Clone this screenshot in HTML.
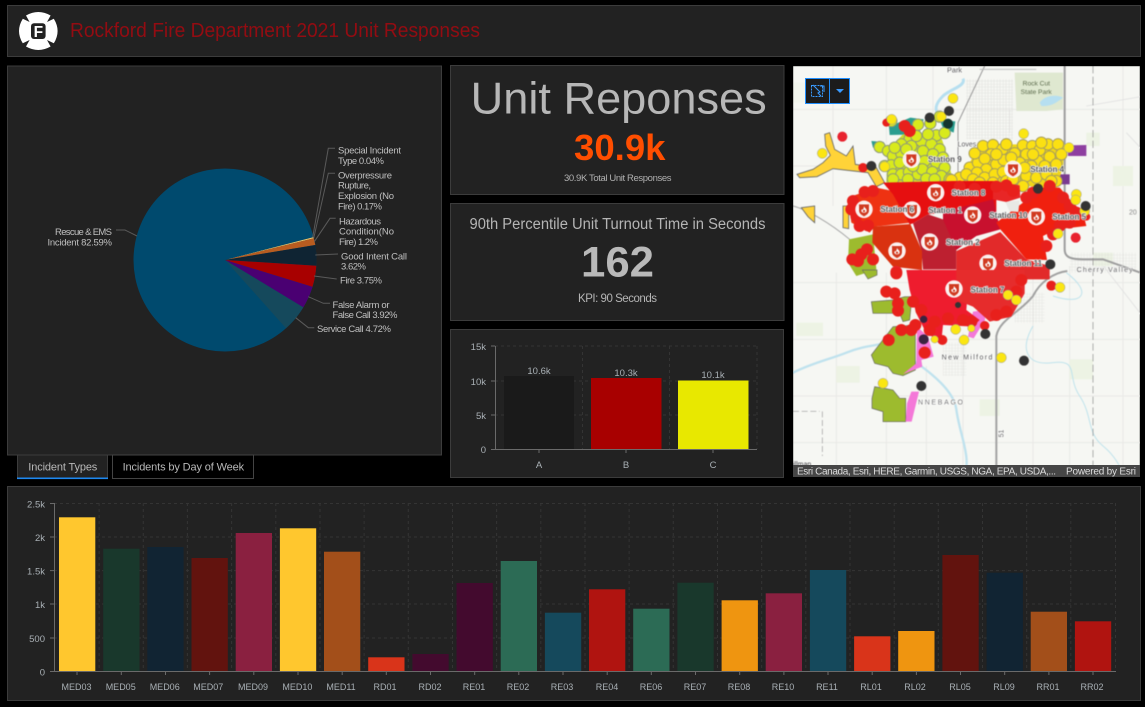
<!DOCTYPE html>
<html lang="en"><head><meta charset="utf-8"><title>Rockford Fire Department 2021 Unit Responses</title>
<style>
html,body{margin:0;padding:0;background:#000;width:1145px;height:707px;overflow:hidden}
svg{display:block;font-family:"Liberation Sans",sans-serif}
.p{fill:#222;stroke:#3c3c3c;stroke-width:1}
.pl{font-size:9.5px;fill:#c0c0c0}
.ax{font-size:9.5px;fill:#a9b0b5}
.ld{fill:none;stroke:#5a5a5a;stroke-width:1}
.gr{stroke:#343434;stroke-width:1;stroke-dasharray:3 3;fill:none}
.axl{stroke:#6a6a6a;stroke-width:1;fill:none}
.wy circle{r:17px;fill:#d8ea1c;stroke:#8f9a78;stroke-width:3px}
.ey circle{r:17px;fill:#fbe012;stroke:#a89e5c;stroke-width:3px}
.rd circle{r:18px;fill:#e8201c}
.yl circle{r:15px;fill:#fbe612;stroke:#999;stroke-width:1.5px}
.dk circle{r:15px;fill:#333}
.st{font-size:24px;font-weight:bold;fill:#5c5c5c;stroke:#f2f2f2;stroke-width:4px;paint-order:stroke}
.mp{font-size:21px;fill:#555;stroke:#fff;stroke-width:3px;paint-order:stroke}
</style></head><body>
<svg width="1145" height="707" viewBox="0 0 1145 707" xmlns="http://www.w3.org/2000/svg">
<defs>
<g id="s"><circle r="26" fill="#fff"/><circle r="22" fill="none" stroke="#eec9c2" stroke-width="1.5"/><path d="M-15-15 L15-15 L15 4 C15 13 6 18 0 21 C-6 18-15 13-15 4Z" fill="#d03a20"/><path d="M0-10 C1-4 9-2 8 5 C7 12-7 12-8 5 C-9 1-5-1-3 1 C-2-2 0-5 0-10Z" fill="#fff"/><circle cy="5" r="3.5" fill="#d03a20"/></g>
<pattern id="tx" width="18" height="18" patternUnits="userSpaceOnUse"><path d="M0 .5H18M.5 0V18M9 0V18M0 9H18" stroke="#d2d2cf" stroke-width="1.6" fill="none"/></pattern>
<clipPath id="mc"><rect x="793" y="66" width="347" height="411"/></clipPath>
</defs>
<rect width="1145" height="707" fill="#000"/>

<!-- header -->
<rect class="p" x="7.5" y="5.5" width="1133" height="51"/>
<path d="M26 15.5Q38.3 8.5 50.6 15.5L47 22L53.8 18.7Q61.4 31 53.8 43.3L47 40L50.6 46.5Q38.3 53.5 26 46.5L29.6 40L22.8 43.3Q15.2 31 22.8 18.7L29.6 22Z" fill="#fff"/>
<rect x="31" y="23.3" width="14.6" height="15.7" rx="3" fill="#222"/>
<text x="38.3" y="36.8" font-size="15.5" font-weight="bold" fill="#fff" text-anchor="middle">F</text>
<text x="70" y="37" font-size="20.5" fill="#930c12" textLength="410" lengthAdjust="spacingAndGlyphs">Rockford Fire Department 2021 Unit Responses</text>

<!-- pie panel -->
<rect class="p" x="7.5" y="66" width="434" height="389"/>
<circle cx="225" cy="260" r="91.5" fill="#004a6e"/>
<path d="M225 260L313.6 237.1L313.9 238.3Z" fill="#ecc66a"/>
<path d="M225 260L313.9 238.3L315.3 245Z" fill="#b85c20"/>
<path d="M225 260L315.3 245A91.5 91.5 0 0 1 316.3 265.7Z" fill="#0f2433"/>
<path d="M225 260L316.3 265.7A91.5 91.5 0 0 1 312.5 286.9Z" fill="#a80000"/>
<path d="M225 260L312.5 286.9A91.5 91.5 0 0 1 303.3 307.4Z" fill="#4a0072"/>
<path d="M225 260L303.3 307.4A91.5 91.5 0 0 1 286 328.2Z" fill="#15495c"/>
<path class="ld" d="M312.7 237.3L328.3 148.3H335M313.7 238.3L328.3 173.3H335M314.3 241.7L330 218.3H335.7M315.3 255L338 254M314 276L336.7 279M308.3 296.7L323.3 303.3H330M295.7 317.7L308.3 327.7H314.3M137 236L125 230H116"/>
<g class="pl">
<text x="338" y="153.3" textLength="63">Special Incident</text>
<text x="338" y="164" textLength="46">Type 0.04%</text>
<text x="338" y="178.3" textLength="54">Overpressure</text>
<text x="338" y="188.5" textLength="33">Rupture,</text>
<text x="338" y="199" textLength="56">Explosion (No</text>
<text x="338" y="209.3" textLength="44">Fire) 0.17%</text>
<text x="339" y="224.3" textLength="42">Hazardous</text>
<text x="339" y="234.6" textLength="55">Condition(No</text>
<text x="339" y="245" textLength="39">Fire) 1.2%</text>
<text x="341" y="259.3" textLength="66">Good Intent Call</text>
<text x="341" y="269.3" textLength="25">3.62%</text>
<text x="340" y="283.3" textLength="42">Fire 3.75%</text>
<text x="332.5" y="308" textLength="57">False Alarm or</text>
<text x="332.5" y="318" textLength="65">False Call 3.92%</text>
<text x="317" y="332" textLength="74">Service Call 4.72%</text>
<text x="55" y="235" textLength="57">Rescue &amp; EMS</text>
<text x="47.5" y="245.5" textLength="64.5">Incident 82.59%</text>
</g>

<!-- tabs -->
<rect x="17.5" y="455" width="90" height="23.5" fill="#222" stroke="#3c3c3c"/>
<rect x="17" y="477.5" width="91" height="1.6" fill="#1e88f0"/>
<rect x="112.5" y="455" width="141" height="23.5" fill="#000" stroke="#444"/>
<text x="28.3" y="470.3" font-size="11" fill="#b8b8b8" textLength="69">Incident Types</text>
<text x="122.6" y="470.3" font-size="11" fill="#b8b8b8" textLength="121.5">Incidents by Day of Week</text>

<!-- KPI 1 -->
<rect class="p" x="450.5" y="65.5" width="333.5" height="129"/>
<text x="470.7" y="113.5" font-size="44.5" fill="#b7b7b7" textLength="296" lengthAdjust="spacingAndGlyphs">Unit Reponses</text>
<text x="574" y="160" font-size="36" font-weight="bold" fill="#ff4e00" textLength="91.5" lengthAdjust="spacingAndGlyphs">30.9k</text>
<text x="564" y="181" font-size="9.5" fill="#b0b0b0" textLength="107.5">30.9K Total Unit Responses</text>

<!-- KPI 2 -->
<rect class="p" x="450.5" y="203.5" width="333.5" height="117"/>
<text x="469.5" y="229" font-size="15.5" fill="#b5b5b5" textLength="296" lengthAdjust="spacingAndGlyphs">90th Percentile Unit Turnout Time in Seconds</text>
<text x="581" y="276.7" font-size="43" font-weight="bold" fill="#b9b9b9" textLength="73" lengthAdjust="spacingAndGlyphs">162</text>
<text x="578" y="302" font-size="11.5" fill="#b5b5b5" textLength="79">KPI: 90 Seconds</text>

<!-- small bar chart -->
<rect class="p" x="450.5" y="329.5" width="333" height="148"/>
<path class="gr" d="M495 346H757M495 381H757M495 415H757M582.5 346V449M669.5 346V449M757 346V449"/>
<rect x="504" y="376" width="70" height="73.5" fill="#1a1a1a"/>
<rect x="591" y="378" width="70.5" height="71.5" fill="#a80000"/>
<rect x="678" y="380.5" width="70.5" height="69" fill="#e8e800"/>
<path class="axl" d="M495.5 346V449.5H757M491 346H495M491 381H495M491 415H495M491 449.5H495M539 449.5V453M626 449.5V453M713 449.5V453"/>
<g class="ax" text-anchor="end"><text x="486" y="350">15k</text><text x="486" y="385">10k</text><text x="486" y="419">5k</text><text x="486" y="453">0</text></g>
<g class="ax" text-anchor="middle"><text x="539" y="374">10.6k</text><text x="626" y="376">10.3k</text><text x="713" y="378">10.1k</text><text x="539" y="468">A</text><text x="626" y="468">B</text><text x="713" y="468">C</text></g>

<!-- map -->
<g clip-path="url(#mc)">
<g style="filter:blur(.45px)">
<rect x="793" y="66" width="347" height="411" fill="#f6f7f3"/>
<g transform="translate(793 66) scale(.33333)">
<path d="M0 130H1050M0 300H200M120 0V420M280 0V420M420 0V300M990 0V1240M0 650H1050M0 820H1050M0 990H1050M0 1130H1050M130 620V1240M280 620V1240M830 600V1240M720 620V1240M510 800V1240M400 900V1240M950 130H1050M650 130V200" stroke="#e9e9e6" stroke-width="3" fill="none"/>
<path d="M880 120L1056 90M900 560L1056 760L1056 850M1000 200L1056 260" stroke="#e0e0e0" stroke-width="2.5" fill="none"/>
<g fill="#edf3e4"><rect x="880" y="200" width="40" height="40"/><rect x="10" y="770" width="80" height="40"/><rect x="900" y="560" width="60" height="40"/><rect x="130" y="900" width="70" height="50"/><rect x="960" y="300" width="60" height="60"/><rect x="560" y="1000" width="60" height="50"/><rect x="830" y="880" width="70" height="60"/><rect x="0" y="50" width="100" height="60" opacity=".4"/></g>
<path d="M0 920C60 890 110 880 160 860S240 840 285 830M285 835C340 870 480 950 490 1030S540 1180 510 1240" stroke="#bfe2ee" stroke-width="7" fill="none"/>
<path d="M510 38C520 60 470 70 450 90S420 130 440 150" stroke="#b6dff0" stroke-width="9" fill="none"/>
<path d="M820 620C900 680 870 720 780 690M720 780C680 850 700 900 780 890S820 930 860 990S880 1100 930 1140S990 1230 1000 1240" stroke="#bfe3ec" stroke-width="3" fill="none"/>
<rect x="520" y="40" width="140" height="180" fill="url(#tx)" opacity=".6"/>
<rect x="830" y="560" width="200" height="60" fill="url(#tx)" opacity=".45"/>
<rect x="450" y="830" width="70" height="100" fill="url(#tx)" opacity=".45"/>
<rect x="665" y="680" width="90" height="90" fill="url(#tx)" opacity=".45"/>
<path d="M665 20H810V130L760 135L670 135Z" fill="#dfe8d0"/>
<path d="M740 110C760 82 800 88 810 95C790 110 775 122 745 120Z" fill="#b6dff0"/>
<path d="M575 0L495 170V340" stroke="#9a9a9a" stroke-width="3" fill="none"/>
<path d="M560 10H730" stroke="#bdbdbd" stroke-width="3" fill="none"/>
<path d="M815 0V550C815 575 835 580 870 580H930L1056 625" stroke="#9d9d9d" stroke-width="6" fill="none"/>
<path d="M823 615C780 620 740 650 720 690C680 740 620 760 610 810V1240" stroke="#a2a2a2" stroke-width="6" fill="none"/>
<path d="M900 0V1240" stroke="#8a8a8a" stroke-width="2" stroke-dasharray="22 10" fill="none"/>
<path d="M0 420C40 430 110 470 170 520" stroke="#a8a8a8" stroke-width="3" fill="none"/>
<path d="M100 1236H1056" stroke="#9a9a9a" stroke-width="2" stroke-dasharray="22 10" fill="none"/>
<path d="M88 1036V1170M0 1036H80" stroke="#9a9a9a" stroke-width="2" stroke-dasharray="18 8" fill="none"/>
<text class="mp" x="462" y="20" style="font-size:22px">Park</text>
<text class="mp" x="689" y="58" style="font-size:20px;fill:#5c6b4c;stroke:none">Rock Cut</text>
<text class="mp" x="683" y="84" style="font-size:20px;fill:#5c6b4c;stroke:none">State Park</text>
<text class="mp" x="494" y="242" style="font-size:21px">Loves</text>
<text class="mp" x="1008" y="446" style="fill:#888;stroke:none">20</text>
<text class="mp" x="851" y="618" textLength="168" style="fill:#666">Cherry Valley</text>
<!-- polygons -->
<path d="M12 325L60 310L90 290L112 268L98 240L95 205L110 200L125 250L160 270L180 240L187 295L250 305L275 350L250 362L225 320L120 308L72 332L20 335Z" fill="#ffd338" stroke="#666" stroke-width="2.5"/>
<path d="M25 425L65 420V470L45 452ZM150 420H167V488L150 485Z" fill="#ffd338" stroke="#666" stroke-width="2.5"/>
<path d="M235 225L272 228L282 250L240 245ZM288 182L352 155L392 160L378 205L290 207ZM440 162L487 166L482 200L450 186Z" fill="#2a9d8f"/>
<path d="M825 238L880 237V270H825Z" fill="#8e3fa0"/>
<path d="M790 325H830V355H790Z" fill="#7a3a90"/>
<path d="M168 520L240 505L250 610L190 630L165 590Z" fill="#9dbb2e"/>
<rect x="385" y="188" width="28" height="20" fill="#fff"/>
<!-- yellow base -->
<path d="M285 250L330 205L440 200L460 260L480 345L280 350Z" fill="#cfe022"/>
<path d="M510 345L530 290L560 235L815 235L810 300L790 370L620 350Z" fill="#efd618"/>
<!-- yellow west -->
<g class="wy">
<circle cx="295" cy="165"/><circle cx="375" cy="176"/><circle cx="412" cy="172"/><circle cx="430" cy="208"/><circle cx="455" cy="201"/><circle cx="260" cy="243"/><circle cx="285" cy="255"/><circle cx="275" cy="300"/><circle cx="350" cy="218"/><circle cx="325" cy="235"/><circle cx="355" cy="240"/><circle cx="385" cy="225"/><circle cx="415" cy="235"/><circle cx="440" cy="250"/><circle cx="300" cy="270"/><circle cx="325" cy="262"/><circle cx="390" cy="255"/><circle cx="420" cy="265"/><circle cx="450" cy="275"/><circle cx="295" cy="298"/><circle cx="320" cy="290"/><circle cx="395" cy="285"/><circle cx="430" cy="290"/><circle cx="455" cy="305"/><circle cx="300" cy="325"/><circle cx="325" cy="325"/><circle cx="348" cy="318"/><circle cx="375" cy="325"/><circle cx="388" cy="310"/><circle cx="418" cy="318"/><circle cx="445" cy="330"/><circle cx="300" cy="340"/><circle cx="400" cy="338"/><circle cx="470" cy="340"/><circle cx="360" cy="300"/><circle cx="440" cy="152"/><circle cx="305" cy="245"/><circle cx="340" cy="250"/><circle cx="370" cy="210"/><circle cx="405" cy="205"/><circle cx="345" cy="340"/><circle cx="425" cy="340"/>
</g>
<g class="ey">
<circle cx="500" cy="335"/><circle cx="530" cy="305"/><circle cx="555" cy="290"/><circle cx="545" cy="262"/><circle cx="570" cy="240"/><circle cx="600" cy="237"/><circle cx="628" cy="250"/><circle cx="595" cy="265"/><circle cx="575" cy="278"/><circle cx="610" cy="295"/><circle cx="580" cy="310"/><circle cx="552" cy="320"/><circle cx="520" cy="325"/><circle cx="540" cy="340"/><circle cx="575" cy="335"/><circle cx="605" cy="325"/><circle cx="630" cy="318"/><circle cx="632" cy="282"/><circle cx="665" cy="262"/><circle cx="690" cy="238"/><circle cx="718" cy="240"/><circle cx="740" cy="252"/><circle cx="765" cy="235"/><circle cx="795" cy="235"/><circle cx="805" cy="265"/><circle cx="770" cy="272"/><circle cx="735" cy="285"/><circle cx="700" cy="265"/><circle cx="680" cy="290"/><circle cx="715" cy="300"/><circle cx="755" cy="300"/><circle cx="790" cy="295"/><circle cx="700" cy="330"/><circle cx="730" cy="335"/><circle cx="760" cy="325"/><circle cx="790" cy="345"/><circle cx="665" cy="340"/><circle cx="640" cy="345"/><circle cx="690" cy="360"/><circle cx="600" cy="350"/><circle cx="655" cy="275"/><circle cx="660" cy="340"/><circle cx="475" cy="342"/><circle cx="640" cy="235"/><circle cx="560" cy="350"/><circle cx="745" cy="230"/><circle cx="610" cy="265"/><circle cx="695" cy="305"/><circle cx="775" cy="345"/><circle cx="720" cy="265"/>
</g>
<!-- red zones -->
<path d="M165 395L250 365L300 375L355 470L245 482L230 500L175 470Z" fill="#ee3212"/>
<path d="M270 350L480 345L610 345V440L450 440L405 445L360 472L350 475L300 385Z" fill="#e60f10"/>
<path d="M600 345L680 358L682 395L640 408L600 400Z" fill="#e82626"/>
<path d="M450 437L600 400L622 490L550 510L490 552L450 500Z" fill="#c8102e"/>
<path d="M360 472L405 445L450 460L490 552V610H390L385 552Z" fill="#bd2030"/>
<path d="M240 482L352 474L387 555V612L300 602L238 530Z" fill="#d93210"/>
<path d="M490 555L622 498L700 580L770 600V640H490Z" fill="#e22a2a"/>
<path d="M610 470L690 410L715 365L800 365L835 405L870 440L880 480L790 490L750 510L762 582L700 580L622 490Z" fill="#f0200f"/>
<path d="M637 408L680 403L676 438L650 436Z" fill="#e8e8e4"/>
<g class="rd">
<circle cx="148" cy="212" style="r:15px;fill:#e8222e"/><circle cx="210" cy="305" style="r:14px"/><circle cx="178" cy="580"/><circle cx="222" cy="550"/><circle cx="195" cy="585"/><circle cx="205" cy="565"/><circle cx="240" cy="580"/><circle cx="335" cy="180"/><circle cx="350" cy="195"/><circle cx="280" cy="170" style="r:12px"/><circle cx="500" cy="362"/><circle cx="545" cy="368"/><circle cx="610" cy="362"/><circle cx="640" cy="358"/><circle cx="770" cy="360"/><circle cx="700" cy="395"/><circle cx="720" cy="380"/><circle cx="660" cy="375"/><circle cx="848" cy="515" style="r:15px;fill:#e8222e"/><circle cx="880" cy="452" style="r:12px"/><circle cx="180" cy="405"/><circle cx="190" cy="450"/><circle cx="175" cy="430"/><circle cx="215" cy="378"/><circle cx="240" cy="375"/><circle cx="200" cy="480"/><circle cx="225" cy="478"/><circle cx="850" cy="440"/><circle cx="830" cy="470"/><circle cx="800" cy="480"/><circle cx="810" cy="395"/><circle cx="830" cy="420"/><circle cx="780" cy="505"/><circle cx="760" cy="540"/><circle cx="310" cy="618" style="fill:#e8222e"/>
</g>
<g class="yl"><circle cx="480" cy="97"/><circle cx="445" cy="152"/><circle cx="88" cy="262"/><circle cx="692" cy="203"/><circle cx="828" cy="245"/><circle cx="850" cy="385"/><circle cx="848" cy="402"/><circle cx="795" cy="503"/><circle cx="875" cy="435"/><circle cx="296" cy="160"/><circle cx="275" cy="302"/></g>
<g class="dk"><circle cx="468" cy="135"/><circle cx="410" cy="155"/><circle cx="465" cy="173" style="fill:#14352f"/><circle cx="235" cy="300"/><circle cx="772" cy="595"/><circle cx="735" cy="368"/><circle cx="878" cy="420"/></g>
<g><use href="#s" x="355" y="280"/><use href="#s" x="660" y="310"/><use href="#s" x="428" y="380"/><use href="#s" x="213" y="430"/><use href="#s" x="357" y="432"/><use href="#s" x="539" y="447"/><use href="#s" x="730" y="452"/><use href="#s" x="410" y="528"/><use href="#s" x="312" y="555"/><use href="#s" x="585" y="592"/></g>
<g class="st"><text x="405" y="288">Station 9</text><text x="712" y="318">Station 4</text><text x="476" y="388">Station 8</text><text x="262" y="438">Station 6</text><text x="406" y="441">Station 1</text><text x="589" y="456">Station 10</text><text x="778" y="460">Station 5</text><text x="459" y="537">Station 2</text><text x="634" y="600">Station 11</text></g>
</g>
<g transform="translate(793 270) scale(.33333)">
<path d="M235 255L300 170L367 165V300L330 317L300 310L285 290L245 280ZM237 385L245 350L300 360L320 385L338 385V455H270V425L237 415ZM235 95L300 90L335 80L357 80L350 150L330 155L320 130L240 130ZM208 0H252V15L225 27Z" fill="#9dbb2e" stroke="#666" stroke-width="2"/>
<path d="M372 170L405 200L422 260L385 270L388 290L330 312L370 280ZM355 365H378L356 455H338L342 400ZM540 125L576 120V150L542 205L525 200Z" fill="#f478d8"/>
<path d="M340 0H500L525 60L520 120L560 150L540 170L450 165L445 215L400 190L370 130L350 60Z" fill="#ee1c2e"/>
<path d="M490 0H695V70L655 140L590 155L540 110L490 90Z" fill="#e62c2c"/>
<g class="rd"><circle cx="280" cy="65"/><circle cx="305" cy="70"/><circle cx="315" cy="100"/><circle cx="315" cy="122"/><circle cx="360" cy="95"/><circle cx="325" cy="180"/><circle cx="355" cy="180"/><circle cx="367" cy="165"/><circle cx="287" cy="210"/><circle cx="395" cy="248"/><circle cx="448" cy="210" style="r:15px"/><circle cx="410" cy="180"/><circle cx="575" cy="167" style="r:14px"/><circle cx="775" cy="47" style="r:15px"/><circle cx="310" cy="10"/><circle cx="465" cy="145"/><circle cx="510" cy="150"/><circle cx="535" cy="155"/><circle cx="640" cy="125"/><circle cx="610" cy="135"/><circle cx="425" cy="155"/><circle cx="385" cy="120"/><circle cx="670" cy="65"/><circle cx="685" cy="30"/></g>
<g class="yl"><circle cx="488" cy="178"/><circle cx="513" cy="210"/><circle cx="625" cy="263"/><circle cx="801" cy="52"/><circle cx="270" cy="340"/><circle cx="425" cy="208" style="r:11px"/><circle cx="645" cy="75"/><circle cx="670" cy="90"/><circle cx="535" cy="175" style="r:11px"/></g>
<g class="dk"><circle cx="693" cy="272"/><circle cx="577" cy="192"/><circle cx="385" cy="348"/><circle cx="392" cy="208" style="fill:#3a2440"/><circle cx="392" cy="148" style="r:11px;fill:#3a2440"/><circle cx="495" cy="105" style="r:9px"/></g>
<use href="#s" x="483" y="57"/>
<text class="st" x="533" y="68">Station 7</text>
<text class="mp" x="446" y="268" textLength="152">New Milford</text>
<text class="mp" x="375" y="404" textLength="135" style="fill:#777">NNEBAGO</text>
<text class="mp" x="625" y="515" transform="rotate(-90 622 505)" style="fill:#666">51</text>
<text class="mp" x="0" y="590" style="fill:#333">illman</text>
</g>
</g>
<!-- widget -->
<rect x="805.5" y="78.5" width="44" height="25" fill="#1c1c1c" stroke="#1f8fff" stroke-width="1"/>
<path d="M829.5 78.5V103.5" stroke="#1f8fff"/>
<rect x="811.5" y="85.5" width="11" height="11" fill="none" stroke="#3a9bff" stroke-dasharray="2 1"/>
<path d="M813 85L820 92L818 93L821 96M820 86H824V92" stroke="#3a9bff" fill="none"/>
<path d="M836 89H844L840 93Z" fill="#3a9bff"/>
<!-- attribution -->
<rect x="793" y="465" width="347" height="12" fill="#464646"/>
<text x="797" y="474.5" font-size="10" fill="#dcdcdc" textLength="259">Esri Canada, Esri, HERE, Garmin, USGS, NGA, EPA, USDA,...</text>
<text x="1066" y="474.5" font-size="10" fill="#dcdcdc" textLength="70">Powered by Esri</text>
</g>

<!-- bottom chart -->
<rect class="p" x="7.5" y="486.5" width="1133" height="214"/>
<path class="gr" d="M54 503.5H1116M54 537H1116M54 570.6H1116M54 604H1116M54 638H1116M99.1 503V671M143.3 503V671M187.4 503V671M231.6 503V671M275.8 503V671M320 503V671M364.1 503V671M408.3 503V671M452.5 503V671M496.6 503V671M540.8 503V671M585 503V671M629.1 503V671M673.3 503V671M717.5 503V671M761.7 503V671M805.8 503V671M850 503V671M894.2 503V671M938.3 503V671M982.5 503V671M1026.7 503V671M1070.8 503V671M1115.5 503V671"/>
<g>
<rect x="59" y="517.3" width="36.3" height="154" fill="#ffc72e"/>
<rect x="103.2" y="548.7" width="36.3" height="122.6" fill="#19382c"/>
<rect x="147.3" y="547" width="36.3" height="124.3" fill="#112433"/>
<rect x="191.5" y="558" width="36.3" height="113.3" fill="#62130e"/>
<rect x="235.7" y="533" width="36.3" height="138.3" fill="#8a2040"/>
<rect x="279.9" y="528.3" width="36.3" height="143" fill="#ffc72e"/>
<rect x="324" y="551.7" width="36.3" height="119.6" fill="#a34f1a"/>
<rect x="368.2" y="657.3" width="36.3" height="14" fill="#d9341a"/>
<rect x="412.4" y="654" width="36.3" height="17.3" fill="#430a2e"/>
<rect x="456.5" y="583" width="36.3" height="88.3" fill="#430a2e"/>
<rect x="500.7" y="561" width="36.3" height="110.3" fill="#2c6b55"/>
<rect x="544.9" y="612.7" width="36.3" height="58.6" fill="#15495c"/>
<rect x="589" y="589.3" width="36.3" height="82" fill="#b01410"/>
<rect x="633.2" y="608.7" width="36.3" height="62.6" fill="#2c6b55"/>
<rect x="677.4" y="582.7" width="36.3" height="88.6" fill="#19382c"/>
<rect x="721.6" y="600.3" width="36.3" height="71" fill="#ef9510"/>
<rect x="765.7" y="593.3" width="36.3" height="78" fill="#8a2040"/>
<rect x="809.9" y="570" width="36.3" height="101.3" fill="#15495c"/>
<rect x="854.1" y="636.3" width="36.3" height="35" fill="#d9341a"/>
<rect x="898.2" y="631" width="36.3" height="40.3" fill="#ef9510"/>
<rect x="942.4" y="555" width="36.3" height="116.3" fill="#62130e"/>
<rect x="986.6" y="572.7" width="36.3" height="98.6" fill="#112433"/>
<rect x="1030.7" y="611.7" width="36.3" height="59.6" fill="#a34f1a"/>
<rect x="1074.9" y="621.3" width="36.3" height="50" fill="#b01410"/>
</g>
<path class="axl" d="M54.5 503V671.5H1116M50 503.5H54M50 537H54M50 570.6H54M50 604H54M50 638H54M50 671.5H54M77 671.5V675M121.3 671.5V675M165.5 671.5V675M209.6 671.5V675M253.8 671.5V675M298 671.5V675M342.2 671.5V675M386.3 671.5V675M430.5 671.5V675M474.7 671.5V675M518.8 671.5V675M563 671.5V675M607.2 671.5V675M651.3 671.5V675M695.5 671.5V675M739.7 671.5V675M783.9 671.5V675M828 671.5V675M872.2 671.5V675M916.4 671.5V675M960.5 671.5V675M1004.7 671.5V675M1048.9 671.5V675M1093 671.5V675"/>
<g class="ax" text-anchor="end"><text x="45" y="507.5">2.5k</text><text x="45" y="541">2k</text><text x="45" y="574.6">1.5k</text><text x="45" y="608">1k</text><text x="45" y="642">500</text><text x="45" y="675.5">0</text></g>
<g class="ax" text-anchor="middle" style="font-size:9px">
<text x="76.5" y="690">MED03</text><text x="120.7" y="690">MED05</text><text x="164.7" y="690">MED06</text><text x="208.3" y="690">MED07</text><text x="253" y="690">MED09</text><text x="297.4" y="690">MED10</text><text x="341" y="690">MED11</text><text x="385" y="690">RD01</text><text x="430" y="690">RD02</text><text x="474" y="690">RE01</text><text x="518" y="690">RE02</text><text x="562" y="690">RE03</text><text x="607" y="690">RE04</text><text x="651" y="690">RE06</text><text x="695" y="690">RE07</text><text x="739" y="690">RE08</text><text x="783" y="690">RE10</text><text x="827" y="690">RE11</text><text x="871" y="690">RL01</text><text x="915" y="690">RL02</text><text x="960" y="690">RL05</text><text x="1004" y="690">RL09</text><text x="1048" y="690">RR01</text><text x="1092" y="690">RR02</text>
</g>
</svg>
</body></html>
